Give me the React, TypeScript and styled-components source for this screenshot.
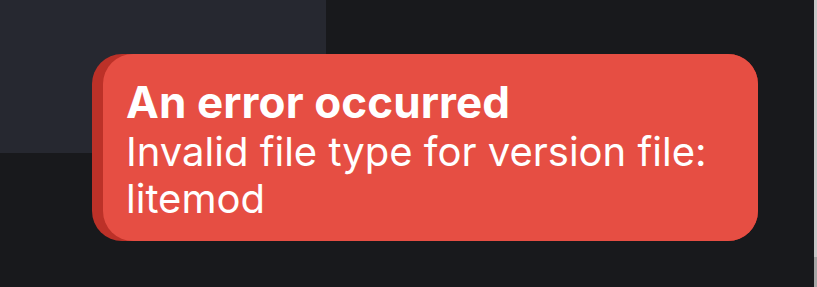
import React from "react";
import styled, { createGlobalStyle } from "styled-components";

const GlobalStyle = createGlobalStyle`
  html, body {
    margin: 0;
    padding: 0;
    background: #18191c;
    font-family: Inter, "Noto Sans", sans-serif;
  }
`;

const Page = styled.div`
  position: relative;
  width: 817px;
  height: 287px;
  overflow: hidden;
  background: #18191c;
  display: flex;
`;

const Main = styled.div`
  flex: 1;
  display: flex;
  flex-direction: column;
`;

const SidePanel = styled.div`
  width: 326px;
  height: 153px;
  background: #262830;
`;

const ScrollTrack = styled.div`
  width: 3px;
  background: #c8c8c8;
  display: flex;
  flex-direction: column;
  justify-content: flex-end;
`;

const ScrollThumb = styled.div`
  height: 30px;
  background: #a6a6a6;
`;

const Toast = styled.div`
  position: absolute;
  left: 92px;
  top: 54px;
  width: 666px;
  height: 187px;
  box-sizing: border-box;
  background: #bc3128;
  border-radius: 30px;
  display: flex;
`;

const ToastBody = styled.div`
  flex: 1;
  margin-left: 11px;
  background: #e64e43;
  border-radius: 30px;
  padding: 23px 23px 0;
  color: #ffffff;
  display: flex;
  flex-direction: column;
`;

const Title = styled.div`
  font-size: 44px;
  line-height: 51px;
  font-weight: 700;
  letter-spacing: 0.1px;
`;

const Message = styled.div`
  font-size: 40px;
  line-height: 47px;
  font-weight: 400;
`;

export default function App() {
  return (
    <>
      <GlobalStyle />
      <Page>
        <Main>
          <SidePanel />
        </Main>
        <ScrollTrack>
          <ScrollThumb />
        </ScrollTrack>
        <Toast>
          <ToastBody>
            <Title>An error occurred</Title>
            <Message>Invalid file type for version file: litemod</Message>
          </ToastBody>
        </Toast>
      </Page>
    </>
  );
}
